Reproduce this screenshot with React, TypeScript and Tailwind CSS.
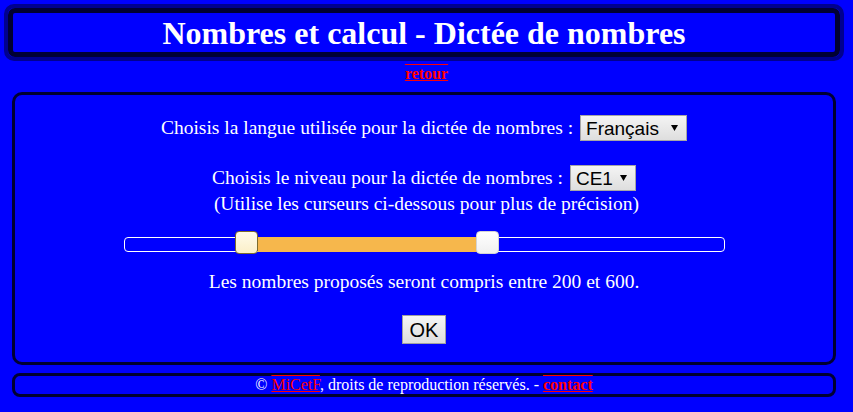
import React from "react";

function FakeSelect({ label, width }: { label: string; width: string }) {
  return (
    <span
      className={`inline-flex h-[26px] ${width} items-center justify-between border border-[#a6a6a6] bg-gradient-to-b from-[#f4f4f4] to-[#dedede] pl-[5px] pr-[8px] align-middle text-[19px] leading-none text-black`}
      style={{ fontFamily: '"Liberation Sans", Arial, sans-serif' }}
    >
      <span>{label}</span>
      <svg width="7" height="6" viewBox="0 0 7 6" className="ml-1">
        <path d="M0 0h7L3.5 6z" fill="#000" />
      </svg>
    </span>
  );
}

function RangeSlider() {
  return (
    <div className="relative mx-auto h-[15px] w-[601px] rounded-[4px] border border-white">
      {/* selected range */}
      <div className="absolute top-[-1px] bottom-[-1px] left-[133px] w-[219px] bg-[#f6b74c]" />
      {/* handles */}
      <div className="absolute top-[-7px] left-[110px] h-[23px] w-[23px] rounded-[4px] border border-[#7d6b2c] bg-gradient-to-b from-[#fffbea] to-[#fbefc8]" />
      <div className="absolute top-[-7px] left-[351px] h-[23px] w-[23px] rounded-[4px] border border-[#d3d3d3] bg-gradient-to-b from-[#ffffff] to-[#f0f0f0]" />
    </div>
  );
}

export default function App() {
  return (
    <div
      className="min-h-screen bg-[#0000ff] pt-[4px] text-white"
      style={{ fontFamily: '"Liberation Serif", "Times New Roman", serif' }}
    >
      {/* Title */}
      <header className="ml-[4px] mr-[9px] rounded-[10px] border-[4px] border-[#00008f]">
        <div className="flex h-[49px] items-center justify-center rounded-[7px] border-[5px] border-[#000033]">
          <h1 className="text-[32px] font-bold leading-none">Nombres et calcul - Dictée de nombres</h1>
        </div>
      </header>

      <div className="flex h-[31px] justify-center pt-[3px]">
        <a href="#" className="text-[16px] font-bold leading-[20px] text-[#ff0000] [text-decoration-line:underline_overline]">
          retour
        </a>
      </div>

      {/* Main panel */}
      <main className="ml-[12px] mr-[17px] flex h-[273px] flex-col items-center rounded-[10px] border-[3px] border-[#000033] pt-[20px] text-[19.5px]">
        <div className="flex h-[26px] items-center gap-[7px]">
          <span>Choisis la langue utilisée pour la dictée de nombres :</span>
          <FakeSelect label="Français" width="w-[107px]" />
        </div>
        <div className="mt-[24px] flex h-[26px] items-center gap-[7px]">
          <span>Choisis le niveau pour la dictée de nombres :</span>
          <FakeSelect label="CE1" width="w-[66px]" />
        </div>
        <div className="mt-[2px] leading-[22px]">&nbsp;(Utilise les curseurs ci-dessous pour plus de précision)</div>

        <div className="mt-[22px] w-full">
          <RangeSlider />
        </div>

        <div className="mt-[19px] leading-[22px]">Les nombres proposés seront compris entre 200 et 600.</div>

        <button
          className="mt-[22px] h-[29px] w-[44px] border border-[#a0a0a0] bg-gradient-to-b from-[#f6f6f6] to-[#dddddd] text-[20px] leading-none text-black"
          style={{ fontFamily: '"Liberation Sans", Arial, sans-serif' }}
        >
          OK
        </button>
      </main>

      {/* Footer */}
      <footer className="ml-[12px] mr-[17px] mt-[8px] flex h-[24px] items-center justify-center rounded-[8px] border-[3px] border-[#000033] text-[16px]">
        <span>
          ©{" "}
          <a href="#" className="text-[#ff0000] [text-decoration-line:underline_overline]">
            MiCetF
          </a>
          , droits de reproduction réservés. -{" "}
          <a href="#" className="font-bold text-[#ff0000] [text-decoration-line:underline_overline]">
            contact
          </a>
        </span>
      </footer>
    </div>
  );
}
